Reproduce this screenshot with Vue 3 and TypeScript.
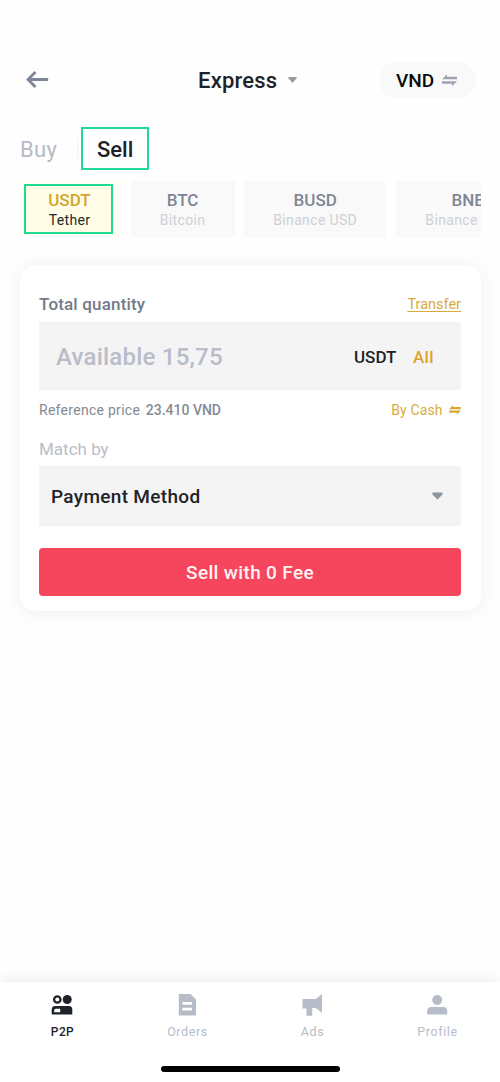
<script setup lang="ts">
interface Coin {
  symbol: string
  name: string
  width: number
  active?: boolean
}

interface NavItem {
  id: 'p2p' | 'orders' | 'ads' | 'profile'
  label: string
}

const coins: Coin[] = [
  { symbol: 'USDT', name: 'Tether', width: 101, active: true },
  { symbol: 'BTC', name: 'Bitcoin', width: 104 },
  { symbol: 'BUSD', name: 'Binance USD', width: 142 },
  { symbol: 'BNB', name: 'Binance Coin', width: 145 },
]

const nav: NavItem[] = [
  { id: 'p2p', label: 'P2P' },
  { id: 'orders', label: 'Orders' },
  { id: 'ads', label: 'Ads' },
  { id: 'profile', label: 'Profile' },
]
</script>

<template>
  <div class="screen">
    <header class="header">
      <svg class="back" width="23" height="18" viewBox="0 0 23 18">
        <path d="M22.200 8.500H3M9.500 1L2 8.500l7.500 7.500" fill="none" stroke="#7d8797" stroke-width="2.800" />
      </svg>
      <div class="title">
        <span class="title-text">Express</span>
        <svg width="9" height="7" viewBox="0 0 9 7"><path d="M.5 0h8v1.500L4.500 6 .500 1.500z" fill="#999ca2" /></svg>
      </div>
      <div class="currency">
        <span class="currency-text">VND</span>
        <svg width="15" height="13" viewBox="0 0 15 13">
          <path d="M0 5.200L5 .300V2.700h10v2.500zM15 7.300L10 12.200V9.800H0V7.300z" fill="#a0a2b0" />
        </svg>
      </div>
    </header>

    <div class="tabs">
      <span class="tab-buy">Buy</span>
      <i class="tab-divider"></i>
      <div class="tab-sell"><span>Sell</span></div>
    </div>

    <div class="coins">
      <div
        v-for="coin in coins"
        :key="coin.symbol"
        class="coin"
        :class="{ active: coin.active }"
        :style="{ width: coin.width + 'px' }"
      >
        <div class="coin-inner">
          <span class="symbol">{{ coin.symbol }}</span>
          <span class="coin-name">{{ coin.name }}</span>
        </div>
      </div>
    </div>

    <section class="card">
      <div class="row top">
        <span class="quantity">Total quantity</span>
        <span class="transfer">Transfer</span>
      </div>
      <div class="field">
        <span class="available">Available 15,75</span>
        <span class="unit">USDT</span>
        <span class="all">All</span>
      </div>
      <div class="row reference">
        <span class="ref-label">Reference price</span>
        <span class="price">23.410 VND</span>
        <span class="cash">By Cash</span>
        <svg width="12" height="10" viewBox="0 0 12 10">
          <path d="M0 4.200L4 .300V2h7.700v2.200zM12 5.500L8 9.400V7.700H.3V5.500z" fill="#dba52f" />
        </svg>
      </div>
      <div class="match">Match by</div>
      <div class="select">
        <span class="method">Payment Method</span>
        <svg width="11" height="8" viewBox="0 0 11 8"><path d="M.5.500h10v2L5.500 7.500l-5-5z" fill="#8b949d" /></svg>
      </div>
      <button class="sell"><span>Sell with 0 Fee</span></button>
    </section>

    <footer class="footer">
      <nav class="nav">
        <div v-for="item in nav" :key="item.id" class="nav-item" :class="item.id">
          <svg width="24" height="24" viewBox="0 0 24 24" fill="currentColor">
            <template v-if="item.id === 'p2p'">
              <circle cx="7.300" cy="5.500" r="3.200" fill="none" stroke="currentColor" stroke-width="2.300" />
              <circle cx="17.200" cy="5.500" r="4.500" />
              <path fill-rule="evenodd" d="M5.200 12h13.600a3.500 3.500 0 0 1 3.500 3.500V20.500H1.700v-5A3.500 3.500 0 0 1 5.200 12zm.6 2.700a1.600 1.600 0 0 0-1.600 1.600V18.200h6v-3.500z" />
            </template>
            <path v-else-if="item.id === 'orders'" fill-rule="evenodd" d="M3.800 0h11.700l5.500 5.500v16H3.800zM7.500 8v2.700h9.500V8zm0 5.800v2.700h9.500v-2.700z" />
            <path v-else-if="item.id === 'ads'" d="M2.500 5H15.800l6.200-5v19l-6.200-5H12.200V21.700H6.400V14.500H2.500z" />
            <template v-else>
              <circle cx="12.200" cy="6" r="5" />
              <path d="M6.200 13h12a4 4 0 0 1 4 4V20.500H2.200V17A4 4 0 0 1 6.200 13z" />
            </template>
          </svg>
          <span>{{ item.label }}</span>
        </div>
      </nav>
      <div class="home"></div>
    </footer>
  </div>
</template>

<style>
body {
  margin: 0;
  background: #fefefe;
}
</style>

<style scoped>
.screen {
  width: 500px;
  height: 1082px;
  box-sizing: border-box;
  padding-top: 61px;
  display: flex;
  flex-direction: column;
  overflow: hidden;
  background: #fefefe;
  color: #1e2329;
  font-family: Roboto, "Noto Sans", sans-serif;
  font-weight: 500;
  white-space: nowrap;
}
svg { display: block; flex: none; }
.header {
  display: grid;
  grid-template-columns: 172px 1fr 97px;
  height: 36px;
  padding: 0 24px 0 26px;
  align-items: center;
}
.title { display: flex; align-items: center; gap: 10px; height: 38px; }
.title-text { font-size: 22px; letter-spacing: 0.2px; width: 80px; line-height: 38px; padding-top: 1px; }
.currency {
  display: flex;
  align-items: center;
  gap: 7px;
  height: 36px;
  box-sizing: border-box;
  padding-left: 17px;
  border-radius: 18px;
  background: #f9f9f9;
  color: #090a0d;
}
.currency-text { font-size: 19px; width: 39px; }
.tabs {
  display: flex;
  align-items: center;
  height: 43px;
  margin: 30px 0 0 20px;
  font-size: 22px;
}
.tab-buy { width: 57px; color: #b7bac3; font-weight: 400; letter-spacing: 0.3px; padding-top: 1px; }
.tab-divider { width: 2px; height: 21px; margin-right: 2px; background: #f8f8f8; }
.tab-sell {
  box-sizing: border-box;
  width: 68px;
  height: 43px;
  padding-left: 14px;
  border: 2px solid #20d994;
  line-height: 41px;
}
.coins {
  display: flex;
  gap: 9.6px;
  width: 461px;
  height: 56px;
  margin: 11px 0 0 20px;
  overflow: hidden;
}
.coin { flex: none; box-sizing: border-box; background: #f9f9f9; text-align: center; }
.coin-inner {
  height: 56px;
  box-sizing: border-box;
  padding-top: 9px;
  display: flex;
  flex-direction: column;
  align-items: center;
}
.coin.active { background: #fffef4; padding: 3px 8px 3px 4px; }
.coin.active .coin-inner {
  height: 50px;
  padding: 4px 0 0 2px;
  background: #fffde6;
  border: 2px solid #20d994;
}
.symbol { font-size: 17px; line-height: 20px; color: #7e8795; }
.coin-name { font-size: 14px; font-weight: 400; line-height: 20px; color: #cfd0d5; letter-spacing: 0.35px; }
.active .symbol { color: #d3a52e; }
.active .coin-name { color: #25272a; }
.card {
  width: 461px;
  height: 346px;
  box-sizing: border-box;
  margin: 28px 0 0 20px;
  padding: 27px 20px 0 19px;
  border-radius: 16px;
  background: #fff;
  box-shadow: 0 1px 20px rgba(0, 0, 0, 0.065);
}
.row { display: flex; align-items: center; }
.top { height: 24px; justify-content: space-between; }
.quantity { font-size: 17px; color: #737b88; letter-spacing: 0.17px; }
.transfer {
  font-size: 14.5px;
  font-weight: 400;
  color: #d7aa3c;
  text-decoration: underline;
  text-underline-offset: 2px;
  text-decoration-thickness: 1px;
}
.field {
  display: flex;
  align-items: center;
  height: 68px;
  margin-top: 6px;
  padding-left: 17px;
  border-radius: 2px;
  background: #f4f4f4;
}
.available { width: 298px; font-size: 24px; color: #b8bdc8; letter-spacing: 0.22px; padding-top: 2px; }
.unit { width: 59px; font-size: 17px; padding-top: 1px; }
.all { font-size: 17px; color: #dda42b; padding-top: 1px; letter-spacing: 0.3px; }
.reference { height: 20px; margin-top: 10px; font-size: 14px; font-weight: 400; color: #858b96; }
.ref-label { width: 107px; letter-spacing: 0.28px; }
.price { width: 246px; font-weight: 500; }
.cash { width: 58px; color: #d9ac3d; letter-spacing: 0.15px; }
.match { height: 24px; margin-top: 17px; line-height: 24px; font-size: 17px; font-weight: 400; color: #b9bdc6; }
.select {
  display: flex;
  align-items: center;
  justify-content: space-between;
  height: 60px;
  margin-top: 5px;
  padding: 0 18px 0 12px;
  border-radius: 2px;
  background: #f4f4f4;
}
.method { font-size: 19px; letter-spacing: 0.32px; padding-top: 1px; }
.sell {
  display: block;
  width: 100%;
  height: 48px;
  margin-top: 22px;
  padding: 0;
  border: 0;
  border-radius: 4px;
  background: #f6465d;
  color: #fff2f3;
  font: 500 19px/49px Roboto, sans-serif;
  letter-spacing: 0.34px;
}
.footer {
  margin-top: auto;
  height: 100px;
  background: #fff;
  box-shadow: 0 -2px 12px rgba(0, 0, 0, 0.07);
}
.nav { display: grid; grid-template-columns: repeat(4, 125px); height: 84px; }
.nav-item {
  display: flex;
  flex-direction: column;
  align-items: center;
  padding-top: 12px;
  color: #b7bdc8;
  font-size: 12.5px;
  font-weight: 400;
  letter-spacing: 0.6px;
}
.nav-item svg { margin-right: 1px; }
.nav-item span { line-height: 16px; margin-top: 6px; }
.nav-item.p2p { color: #1e2329; font-size: 12px; font-weight: 500; letter-spacing: 0.4px; }
.home { width: 179px; height: 6px; margin: 0 auto; border-radius: 3px; background: #000; }
</style>
